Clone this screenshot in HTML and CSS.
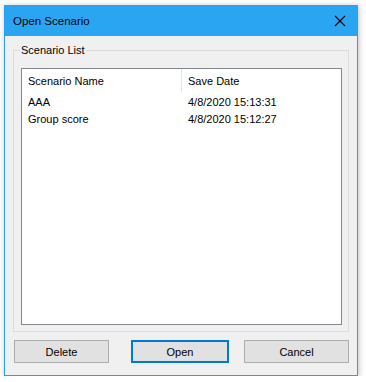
FILE: index.html
```html
<!DOCTYPE html>
<html lang="en">
<head>
    <meta charset="UTF-8">
    <title>Open Scenario</title>
    <link rel="stylesheet" href="styles.css">
</head>
<body>
    <div class="window">
        <div class="titlebar">
            <span class="title">Open Scenario</span>
            <svg class="close" width="12" height="12" viewBox="0 0 12 12">
                <path d="M1 1 L11 11 M11 1 L1 11" stroke="#000" stroke-width="1.1" fill="none"/>
            </svg>
        </div>

        <div class="client">
            <div class="group">
                <span class="group-label">Scenario List</span>
                <div class="listview">
                    <div class="header">
                        <div class="col name">Scenario Name</div>
                        <div class="col date">Save Date</div>
                    </div>
                    <div class="row">
                        <div class="col name">AAA</div>
                        <div class="col date">4/8/2020 15:13:31</div>
                    </div>
                    <div class="row">
                        <div class="col name">Group score</div>
                        <div class="col date">4/8/2020 15:12:27</div>
                    </div>
                </div>
            </div>

            <div class="buttons">
                <button class="btn delete">Delete</button>
                <button class="btn open">Open</button>
                <button class="btn cancel">Cancel</button>
            </div>
        </div>
    </div>
</body>
</html>
```

FILE: styles.css
```css
body {
    margin: 0;
    background-color: #fff;
    font-family: "Liberation Sans", Arial, sans-serif;
    font-size: 11px;
    color: #000;
}

.window {
    width: 352px;
    height: 369px;
    margin: 5px 0 0 4px;
    border: 1px solid #2b9ff0;
    background-color: #f0f0f0;
    box-shadow: 1px 1px 6px rgba(0, 0, 0, 0.25);
}

.titlebar {
    height: 30px;
    background-color: #2aa5f2;
    display: flex;
    align-items: center;
    justify-content: space-between;
    padding: 0 11px 0 8px;
}

.title {
    font-size: 11.5px;
}

.client {
    padding: 14px 8px 0 8px;
}

/* 分组框 */
.group {
    position: relative;
    border: 1px solid #dcdcdc;
    padding: 17px 6px 6px 7px;
}

.group-label {
    position: absolute;
    left: 6px;
    top: -9px;
    padding: 0 1px;
    background-color: #f0f0f0;
    line-height: 16px;
}

.listview {
    height: 255px;
    border: 1px solid #828790;
    background-color: #fff;
}

.header,
.row {
    display: flex;
}

.header {
    height: 24px;
    align-items: center;
}

.row {
    height: 17px;
    align-items: center;
}

.col {
    padding-left: 6px;
    white-space: nowrap;
}

.col.name {
    width: 153px;
}

.header .col.name {
    height: 24px;
    line-height: 25px;
    border-right: 1px solid #e5e5e5;
}

.header .col.date {
    line-height: 25px;
}

.row .col.date {
    padding-left: 7px;
}

.buttons {
    display: flex;
    margin-top: 8px;
    padding-left: 1px;
}

.btn {
    height: 23px;
    font-family: inherit;
    font-size: 11px;
    color: #000;
    background-color: #e1e1e1;
    border: 1px solid #adadad;
    padding: 0;
}

.btn.delete {
    width: 95px;
}

.btn.open {
    width: 98px;
    margin-left: 22px;
    border: 2px solid #0078d7;
}

.btn.cancel {
    width: 105px;
    margin-left: 15px;
}
```
